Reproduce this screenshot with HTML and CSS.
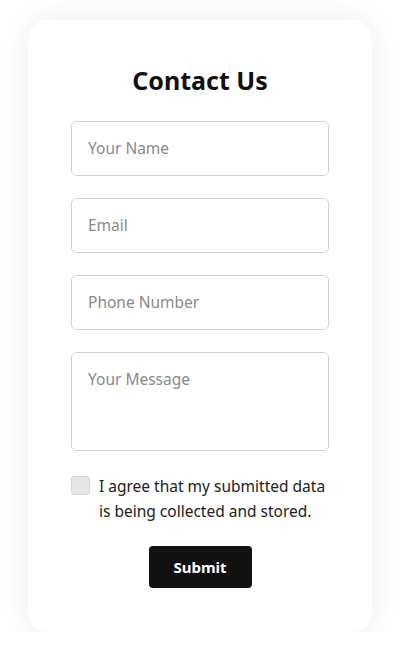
FILE: index.html
```
<!DOCTYPE html>
<html lang="en">
<head>
  <meta charset="UTF-8">
  <meta name="viewport" content="width=device-width, initial-scale=1.0">
  <title>Contact Us</title>
  <link rel="stylesheet" href="styles.css">
</head>
<body>
  <div class="card">
    <h1 class="title">Contact Us</h1>
    <form class="form">
      <input class="field" type="text" placeholder="Your Name">
      <input class="field" type="email" placeholder="Email">
      <input class="field" type="tel" placeholder="Phone Number">
      <textarea class="field message" placeholder="Your Message"></textarea>
      <label class="agree">
        <input class="check" type="checkbox">
        <span>I agree that my submitted data is being collected and stored.</span>
      </label>
      <div class="actions">
        <button class="submit" type="button">Submit</button>
      </div>
    </form>
  </div>
</body>
</html>
```

FILE: styles.css
```
body {
  margin: 0;
  background: #fff;
  font-family: "Noto Sans", "Open Sans", sans-serif;
}
.card {
  width: 344px;
  box-sizing: border-box;
  margin: 20px auto 0;
  padding: 40px 43px 44px;
  background: #fff;
  border-radius: 20px;
  box-shadow: 0 0 30px rgba(0, 0, 0, 0.08);
}
.title {
  margin: 0 0 21px;
  font-size: 25px;
  line-height: 40px;
  font-weight: 700;
  text-align: center;
  color: #111;
}
.form {
  display: flex;
  flex-direction: column;
}
.field {
  display: block;
  box-sizing: border-box;
  width: 100%;
  height: 55px;
  margin: 0 0 22px;
  padding: 0 16px 2px;
  border: 1px solid #d2d2d2;
  border-radius: 5px;
  font-family: inherit;
  font-size: 15.5px;
  color: #333;
  outline: none;
}
.field::placeholder {
  color: #8a8a8a;
}
.message {
  height: 99px;
  margin-bottom: 23px;
  padding-top: 16px;
  resize: none;
  line-height: 20px;
}
.agree {
  display: flex;
  gap: 9px;
  font-size: 15.5px;
  line-height: 25px;
  color: #222;
}
.check {
  appearance: none;
  flex: none;
  width: 19px;
  height: 19px;
  margin: 2px 0 0;
  background: #e6e6e6;
  border: 1px solid #d6d6d6;
  border-radius: 3px;
}
.actions {
  text-align: center;
  margin-top: 22px;
}
.submit {
  width: 103px;
  height: 42px;
  border: 0;
  border-radius: 4px;
  background: #111;
  color: #fff;
  font-family: inherit;
  font-size: 15px;
  font-weight: 700;
}
```
